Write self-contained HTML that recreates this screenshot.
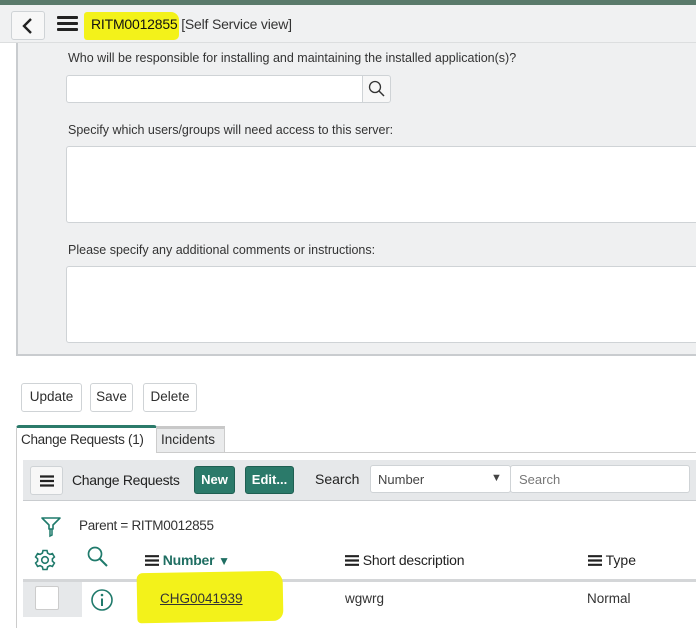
<!DOCTYPE html>
<html><head><meta charset="utf-8"><style>
*{box-sizing:border-box;margin:0;padding:0}
body{width:696px;height:628px;overflow:hidden;background:#fff;font-family:"Liberation Sans",sans-serif;color:#2e2e2e;position:relative}
.a{position:absolute}
.lbl{font-size:12.5px;color:#333}
.inp{background:#fff;border:1px solid #cfd3d6;border-radius:3px}
.btn{border:1px solid #cfd3d6;border-radius:3px;background:#fff;font-size:13.5px;text-align:center;line-height:26px}
.tb{background:#2b7a6a;color:#fff;font-weight:bold;font-size:13px;border-radius:3px;text-align:center;line-height:26px;border:1px solid #1f5f52}
.ham span{display:block;height:3px;background:#222;margin-bottom:3px;border-radius:1px}
.hi{display:inline-block;vertical-align:-1px}
</style></head><body>
<div class="a" style="left:0;top:0;width:696px;height:5px;background:#5a7a6b"></div>
<div class="a" style="left:0;top:5px;width:696px;height:38px;background:#f0f1f2;border-bottom:1px solid #dcdedf"></div>
<div class="a btn" style="left:11px;top:11px;width:34px;height:29px;background:#f7f7f7"><svg width="14" height="20" viewBox="0 0 14 20" style="margin-top:4px"><path d="M10 3 L3 10 L10 17" stroke="#222" stroke-width="2.4" fill="none"/></svg></div>
<div class="a ham" style="left:57px;top:16px;width:21px"><span></span><span></span><span></span></div>
<div class="a" style="left:84px;top:12px;width:95px;height:28px;background:#f3f21a;border-radius:3px 8px 5px 3px"></div>
<div class="a" style="left:91px;top:16px;font-size:14px;letter-spacing:-0.2px"><span style="color:#111">RITM0012855</span> <span style="color:#333">[Self Service view]</span></div>

<div class="a" style="left:16px;top:43px;width:690px;height:313px;background:#eff0f1;border-left:2px solid #c9cccf;border-bottom:2px solid #c9cccf"></div>
<div class="a lbl" style="left:68px;top:51px">Who will be responsible for installing and maintaining the installed application(s)?</div>
<div class="a inp" style="left:66px;top:75px;width:297px;height:28px;border-radius:3px 0 0 3px"></div>
<div class="a inp" style="left:362px;top:75px;width:29px;height:28px;background:#f7f7f7;border-radius:0 3px 3px 0"><svg width="20" height="20" viewBox="0 0 20 20" style="margin:3px 0 0 4px"><circle cx="8" cy="8" r="5.5" stroke="#333" stroke-width="1.3" fill="none"/><path d="M12 12 L17 17" stroke="#333" stroke-width="1.5"/></svg></div>
<div class="a lbl" style="left:68px;top:123px">Specify which users/groups will need access to this server:</div>
<div class="a inp" style="left:66px;top:146px;width:640px;height:77px"></div>
<div class="a lbl" style="left:68px;top:243px">Please specify any additional comments or instructions:</div>
<div class="a inp" style="left:66px;top:266px;width:640px;height:77px"></div>

<div class="a btn" style="left:21px;top:383px;width:61px;height:29px">Update</div>
<div class="a btn" style="left:90px;top:383px;width:43px;height:29px">Save</div>
<div class="a btn" style="left:143px;top:383px;width:54px;height:29px">Delete</div>

<div class="a" style="left:16px;top:425px;width:141px;height:28px;border-top:3px solid #2b7a6a;border-left:1px solid #ccc;border-right:1px solid #ccc;background:#fff;font-size:13.5px;padding:4px 0 0 4px;border-radius:3px 3px 0 0;letter-spacing:-0.3px">Change Requests (1)</div>
<div class="a" style="left:157px;top:426px;width:68px;height:26px;border-top:3px solid #c8c8c8;background:#eaebec;border-right:1px solid #ccc;font-size:13.5px;padding:3px 0 0 4px">Incidents</div>
<div class="a" style="left:157px;top:452px;width:539px;height:1px;background:#ccc"></div>
<div class="a" style="left:16px;top:452px;width:1px;height:176px;background:#ccc"></div>

<div class="a" style="left:23px;top:460px;width:673px;height:41px;background:#e6e8ea;border-bottom:1px solid #c9cccf"></div>
<div class="a btn" style="left:30px;top:466px;width:33px;height:29px;background:#f7f7f7"><svg width="14" height="12" viewBox="0 0 14 12" style="margin-top:8px"><path d="M0 1.5H14M0 6H14M0 10.5H14" stroke="#222" stroke-width="2.2"/></svg></div>
<div class="a" style="left:72px;top:472px;font-size:14px;color:#222;letter-spacing:-0.3px">Change Requests</div>
<div class="a tb" style="left:194px;top:466px;width:41px;height:28px">New</div>
<div class="a tb" style="left:245px;top:466px;width:49px;height:28px">Edit...</div>
<div class="a" style="left:315px;top:471px;font-size:14px;color:#222">Search</div>
<div class="a inp" style="left:370px;top:465px;width:141px;height:28px;font-size:13px;padding:6px 0 0 7px;color:#444">Number<span style="position:absolute;left:120px;top:6px;font-size:11px">▼</span></div>
<div class="a inp" style="left:510px;top:465px;width:180px;height:28px;font-size:13px;padding:6px 0 0 8px;color:#777">Search</div>

<svg class="a" style="left:40px;top:515px" width="24" height="24" viewBox="0 0 24 24"><path d="M2 3 H20 L13 10 V14 H9 V10 Z" stroke="#1f7a6b" stroke-width="1.6" fill="none" stroke-linejoin="round"/><path d="M10 14 V21 L12 20 V14" stroke="#1f7a6b" stroke-width="1.5" fill="none"/></svg>
<div class="a" style="left:79px;top:518px;font-size:13.5px;color:#333;letter-spacing:-0.3px">Parent = RITM0012855</div>

<svg class="a" style="left:33px;top:548px" width="24" height="24" viewBox="0 0 24 24"><g stroke="#1f7a6b" stroke-width="1.6" fill="none"><circle cx="12" cy="12" r="3.3"/><path d="M10 2.5h4l.6 2.6 2.3 1.3 2.5-.8 2 3.4-2 1.8v2.4l2 1.8-2 3.4-2.5-.8-2.3 1.3-.6 2.6h-4l-.6-2.6-2.3-1.3-2.5.8-2-3.4 2-1.8v-2.4l-2-1.8 2-3.4 2.5.8 2.3-1.3z"/></g></svg>
<svg class="a" style="left:86px;top:545px" width="24" height="24" viewBox="0 0 24 24"><circle cx="9" cy="9" r="6.5" stroke="#1f7a6b" stroke-width="1.7" fill="none"/><path d="M14 14 L21 21" stroke="#1f7a6b" stroke-width="2"/></svg>
<div class="a" style="left:145px;top:552px;font-size:14px;color:#1f6e62;font-weight:bold;letter-spacing:-0.2px"><svg class="hi" width="14" height="11" viewBox="0 0 14 11"><path d="M0 1.2H14M0 5.5H14M0 9.8H14" stroke="#222" stroke-width="2.2"/></svg> Number <span style="font-size:12px">▼</span></div>
<div class="a" style="left:345px;top:552px;font-size:14px;color:#222;letter-spacing:-0.2px"><svg class="hi" width="14" height="11" viewBox="0 0 14 11"><path d="M0 1.2H14M0 5.5H14M0 9.8H14" stroke="#222" stroke-width="2.2"/></svg> Short description</div>
<div class="a" style="left:588px;top:552px;font-size:14px;color:#222"><svg class="hi" width="14" height="11" viewBox="0 0 14 11"><path d="M0 1.2H14M0 5.5H14M0 9.8H14" stroke="#222" stroke-width="2.2"/></svg> Type</div>
<div class="a" style="left:23px;top:579px;width:673px;height:3px;background:#d4d6d8"></div>

<div class="a" style="left:23px;top:582px;width:59px;height:35px;background:#e6e8ea"></div>
<div class="a" style="left:35px;top:586px;width:24px;height:24px;background:#fff;border:1px solid #ccc;border-radius:2px"></div>
<svg class="a" style="left:90px;top:588px" width="24" height="24" viewBox="0 0 24 24"><circle cx="12" cy="12" r="10" stroke="#1f7a6b" stroke-width="1.6" fill="none"/><circle cx="12" cy="7" r="1.3" fill="#1f7a6b"/><path d="M12 10.5 V18" stroke="#1f7a6b" stroke-width="2"/></svg>
<div class="a" style="left:137px;top:572px;width:146px;height:50px;background:#f3f21a;border-radius:6px 12px 10px 4px;transform:rotate(-1deg)"></div>
<div class="a" style="left:160px;top:591px;font-size:13.5px;color:#333;text-decoration:underline">CHG0041939</div>
<div class="a" style="left:345px;top:591px;font-size:13.5px;color:#333">wgwrg</div>
<div class="a" style="left:587px;top:591px;font-size:13.5px;color:#333">Normal</div>
</body></html>
